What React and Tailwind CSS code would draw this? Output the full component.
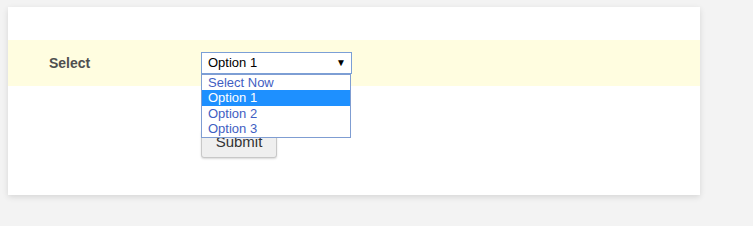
export default function App() {
  const font = { fontFamily: '"Liberation Sans", Arial, sans-serif' };
  return (
    <div className="w-[753px] h-[226px] bg-[#f3f3f3] pt-[7px] pl-[8px]" style={font}>
      <div className="relative w-[692px] h-[188px] bg-white shadow-[0_2px_6px_rgba(0,0,0,0.12)] pt-[33px]">
        <div className="flex items-center h-[46px] bg-[#fffde0]">
          <div className="w-[193px] pl-[41px] text-[14px] font-bold text-[#4f4f4f]">Select</div>
          <div className="flex items-center justify-between w-[151px] h-[22px] border border-[#7b9fd6] bg-white pl-[6px] pr-[5px] text-[13px] text-black">
            <span>Option 1</span>
            <span className="text-[10px] leading-none">▼</span>
          </div>
        </div>
        <div className="pl-[193px] pt-[43px]">
          <button className="w-[76px] h-[29px] rounded-[3px] border border-[#c8c8c8] bg-[#efefef] text-[15px] leading-[22px] pb-[3px] text-[#333] shadow-[0_1px_2px_rgba(0,0,0,0.15)]">
            Submit
          </button>
        </div>
        <div className="absolute left-[193px] top-[67px] w-[150px] border border-[#7f9dd2] bg-white text-[13px] text-[#3f5ec2] leading-[15px] pb-[1px]">
          <div className="px-[6px] h-[15px]">Select Now</div>
          <div className="px-[6px] h-[16px] bg-[#1e90ff] text-white">Option 1</div>
          <div className="px-[6px] h-[15px]">Option 2</div>
          <div className="px-[6px] h-[15px]">Option 3</div>
        </div>
      </div>
    </div>
  );
}
